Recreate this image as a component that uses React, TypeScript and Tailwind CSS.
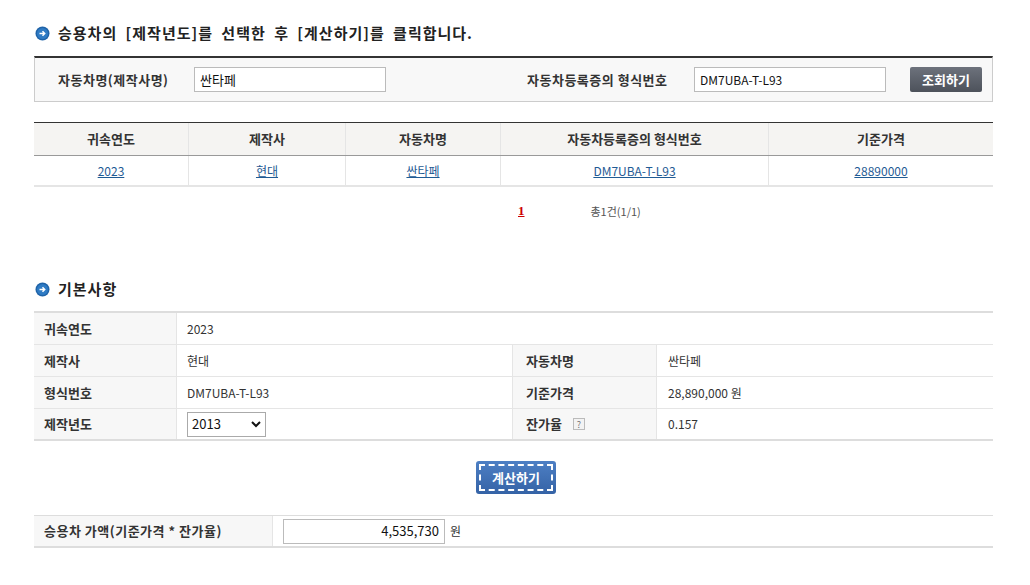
import React from "react";

const Icon = () => (
  <svg width="15" height="15" viewBox="0 0 15 15" className="shrink-0">
    <circle cx="7.5" cy="7.5" r="7" fill="#1f63a8" />
    <circle cx="7.5" cy="7.5" r="5.5" fill="#2f7bc4" />
    <path d="M4.5 7.5h5M7.5 5.3l2.2 2.2-2.2 2.2" stroke="#fff" strokeWidth="1.5" fill="none" />
  </svg>
);

const th = "font-bold text-[#333] text-[13px] text-center border-l border-[#e5e5e5] first:border-l-0";
const td = "text-center border-l border-[#e5e5e5] first:border-l-0";
const lnk = "text-[#1f5b94] underline";

export default function App() {
  return (
    <div className="w-[1030px] h-[585px] bg-white text-[12px] text-[#333]" style={{ fontFamily: '"Noto Sans CJK KR", "Noto Sans", sans-serif' }}>
      <div className="ml-[34px] w-[959px] pt-[24px]">
        <div className="flex items-center gap-[8px] h-[18px] ml-[1px]">
          <Icon />
          <span className="text-[15px] font-bold text-[#222] tracking-[1px] [word-spacing:4px]">승용차의 [제작년도]를 선택한 후 [계산하기]를 클릭합니다.</span>
        </div>
        <div className="mt-[14px] h-[46px] border-t-2 border-[#333] border-x border-b border-x-[#ccc] border-b-[#ccc] bg-[#f8f8f8] flex items-center">
          <span className="ml-[23px] w-[136px] font-bold text-[13px] tracking-[0.5px]">자동차명(제작사명)</span>
          <div className="w-[192px] h-[25px] border border-[#bbb] bg-white flex items-center px-[5px] text-[13px] text-[#111]">싼타페</div>
          <span className="ml-[141px] w-[167px] font-bold text-[13px] tracking-[0.5px]">자동차등록증의 형식번호</span>
          <div className="w-[192px] h-[25px] border border-[#bbb] bg-white flex items-center px-[5px] text-[12px] text-[#111]">DM7UBA-T-L93</div>
          <div className="ml-[24px] w-[72px] h-[25px] rounded-[2px] bg-gradient-to-b from-[#6d727c] to-[#4d525b] text-white font-bold text-[13px] flex items-center justify-center">조회하기</div>
        </div>
        <div className="mt-[20px] border-t border-[#333]">
          <div className="grid grid-cols-[154px_157px_155px_268px_1fr] h-[33px] bg-[#f5f4f2] border-b border-[#999] items-stretch">
            {["귀속연도", "제작사", "자동차명", "자동차등록증의 형식번호", "기준가격"].map((t) => (
              <div key={t} className={th + " flex items-center justify-center"}>{t}</div>
            ))}
          </div>
          <div className="grid grid-cols-[154px_157px_155px_268px_1fr] h-[31px] border-b-2 border-[#e5e5e5]">
            {["2023", "현대", "싼타페", "DM7UBA-T-L93", "28890000"].map((t) => (
              <div key={t} className={td + " flex items-center justify-center"}><span className={lnk}>{t}</span></div>
            ))}
          </div>
        </div>
        <div className="flex h-[20px] items-center mt-[14px]">
          <span className="ml-[484px] text-[#c00] font-bold underline text-[13px]" style={{ fontFamily: '"Liberation Serif", serif' }}>1</span>
          <span className="ml-[66px] text-[11px] text-[#555]">총1건(1/1)</span>
        </div>
        <div className="flex items-center gap-[8px] h-[18px] mt-[59px] ml-[1px]">
          <Icon />
          <span className="text-[15px] font-bold text-[#222] tracking-[1px]">기본사항</span>
        </div>
        <div className="mt-[13px] border-t-2 border-[#ddd]">
          <div className="flex h-[32px] border-b border-[#e5e5e5]">
            <div className="w-[143px] bg-[#f7f7f7] font-bold text-[13px] pl-[10px] flex items-center border-r border-[#e5e5e5]">귀속연도</div>
            <div className="flex-1 pl-[10px] flex items-center">2023</div>
          </div>
          {[
            ["제작사", "현대", "자동차명", "싼타페"],
            ["형식번호", "DM7UBA-T-L93", "기준가격", "28,890,000 원"],
          ].map((r) => (
            <div key={r[0]} className="flex h-[32px] border-b border-[#e5e5e5]">
              <div className="w-[143px] bg-[#f7f7f7] font-bold text-[13px] pl-[10px] flex items-center border-r border-[#e5e5e5]">{r[0]}</div>
              <div className="w-[335px] pl-[10px] flex items-center">{r[1]}</div>
              <div className="w-[145px] bg-[#f7f7f7] font-bold text-[13px] pl-[13px] flex items-center border-x border-[#e5e5e5]">{r[2]}</div>
              <div className="flex-1 pl-[11px] flex items-center">{r[3]}</div>
            </div>
          ))}
          <div className="flex h-[32px] border-b-2 border-[#ddd]">
            <div className="w-[143px] bg-[#f7f7f7] font-bold text-[13px] pl-[10px] flex items-center border-r border-[#e5e5e5]">제작년도</div>
            <div className="w-[335px] pl-[10px] flex items-center">
              <div className="w-[79px] h-[25px] border border-[#aaa] flex items-center justify-between px-[4px] text-[13px] text-[#111]">
                <span>2013</span>
                <svg width="10" height="7" viewBox="0 0 10 7"><path d="M1 1l4 4 4-4" stroke="#111" strokeWidth="2" fill="none" /></svg>
              </div>
            </div>
            <div className="w-[145px] bg-[#f7f7f7] font-bold text-[13px] pl-[13px] flex items-center border-x border-[#e5e5e5]">
              잔가율
              <span className="ml-[11px] w-[12px] h-[12px] border border-[#bbb] bg-[#f3f3f3] text-[9px] leading-none text-[#777] flex items-center justify-center font-normal">?</span>
            </div>
            <div className="flex-1 pl-[11px] flex items-center">0.157</div>
          </div>
        </div>
        <div className="flex mt-[20px]">
          <div className="ml-[442px] w-[80px] h-[33px] rounded-[3px] bg-gradient-to-b from-[#4d7fc4] to-[#3563a6] p-[3px]">
            <div className="w-full h-full border-2 border-dashed border-white flex items-center justify-center text-white font-bold text-[13px]">계산하기</div>
          </div>
        </div>
        <div className="mt-[21px] flex h-[33px] border-t border-[#ddd] border-b-2 border-b-[#ddd]">
          <div className="w-[239px] bg-[#f7f7f7] font-bold text-[13px] pl-[10px] flex items-center border-r border-[#e5e5e5] tracking-[0.5px]">승용차 가액(기준가격 * 잔가율)</div>
          <div className="flex items-center pl-[10px]">
            <div className="w-[162px] h-[25px] border border-[#bbb] flex items-center justify-end pr-[5px] text-[13px] text-[#111]">4,535,730</div>
            <span className="ml-[5px]">원</span>
          </div>
        </div>
      </div>
    </div>
  );
}
